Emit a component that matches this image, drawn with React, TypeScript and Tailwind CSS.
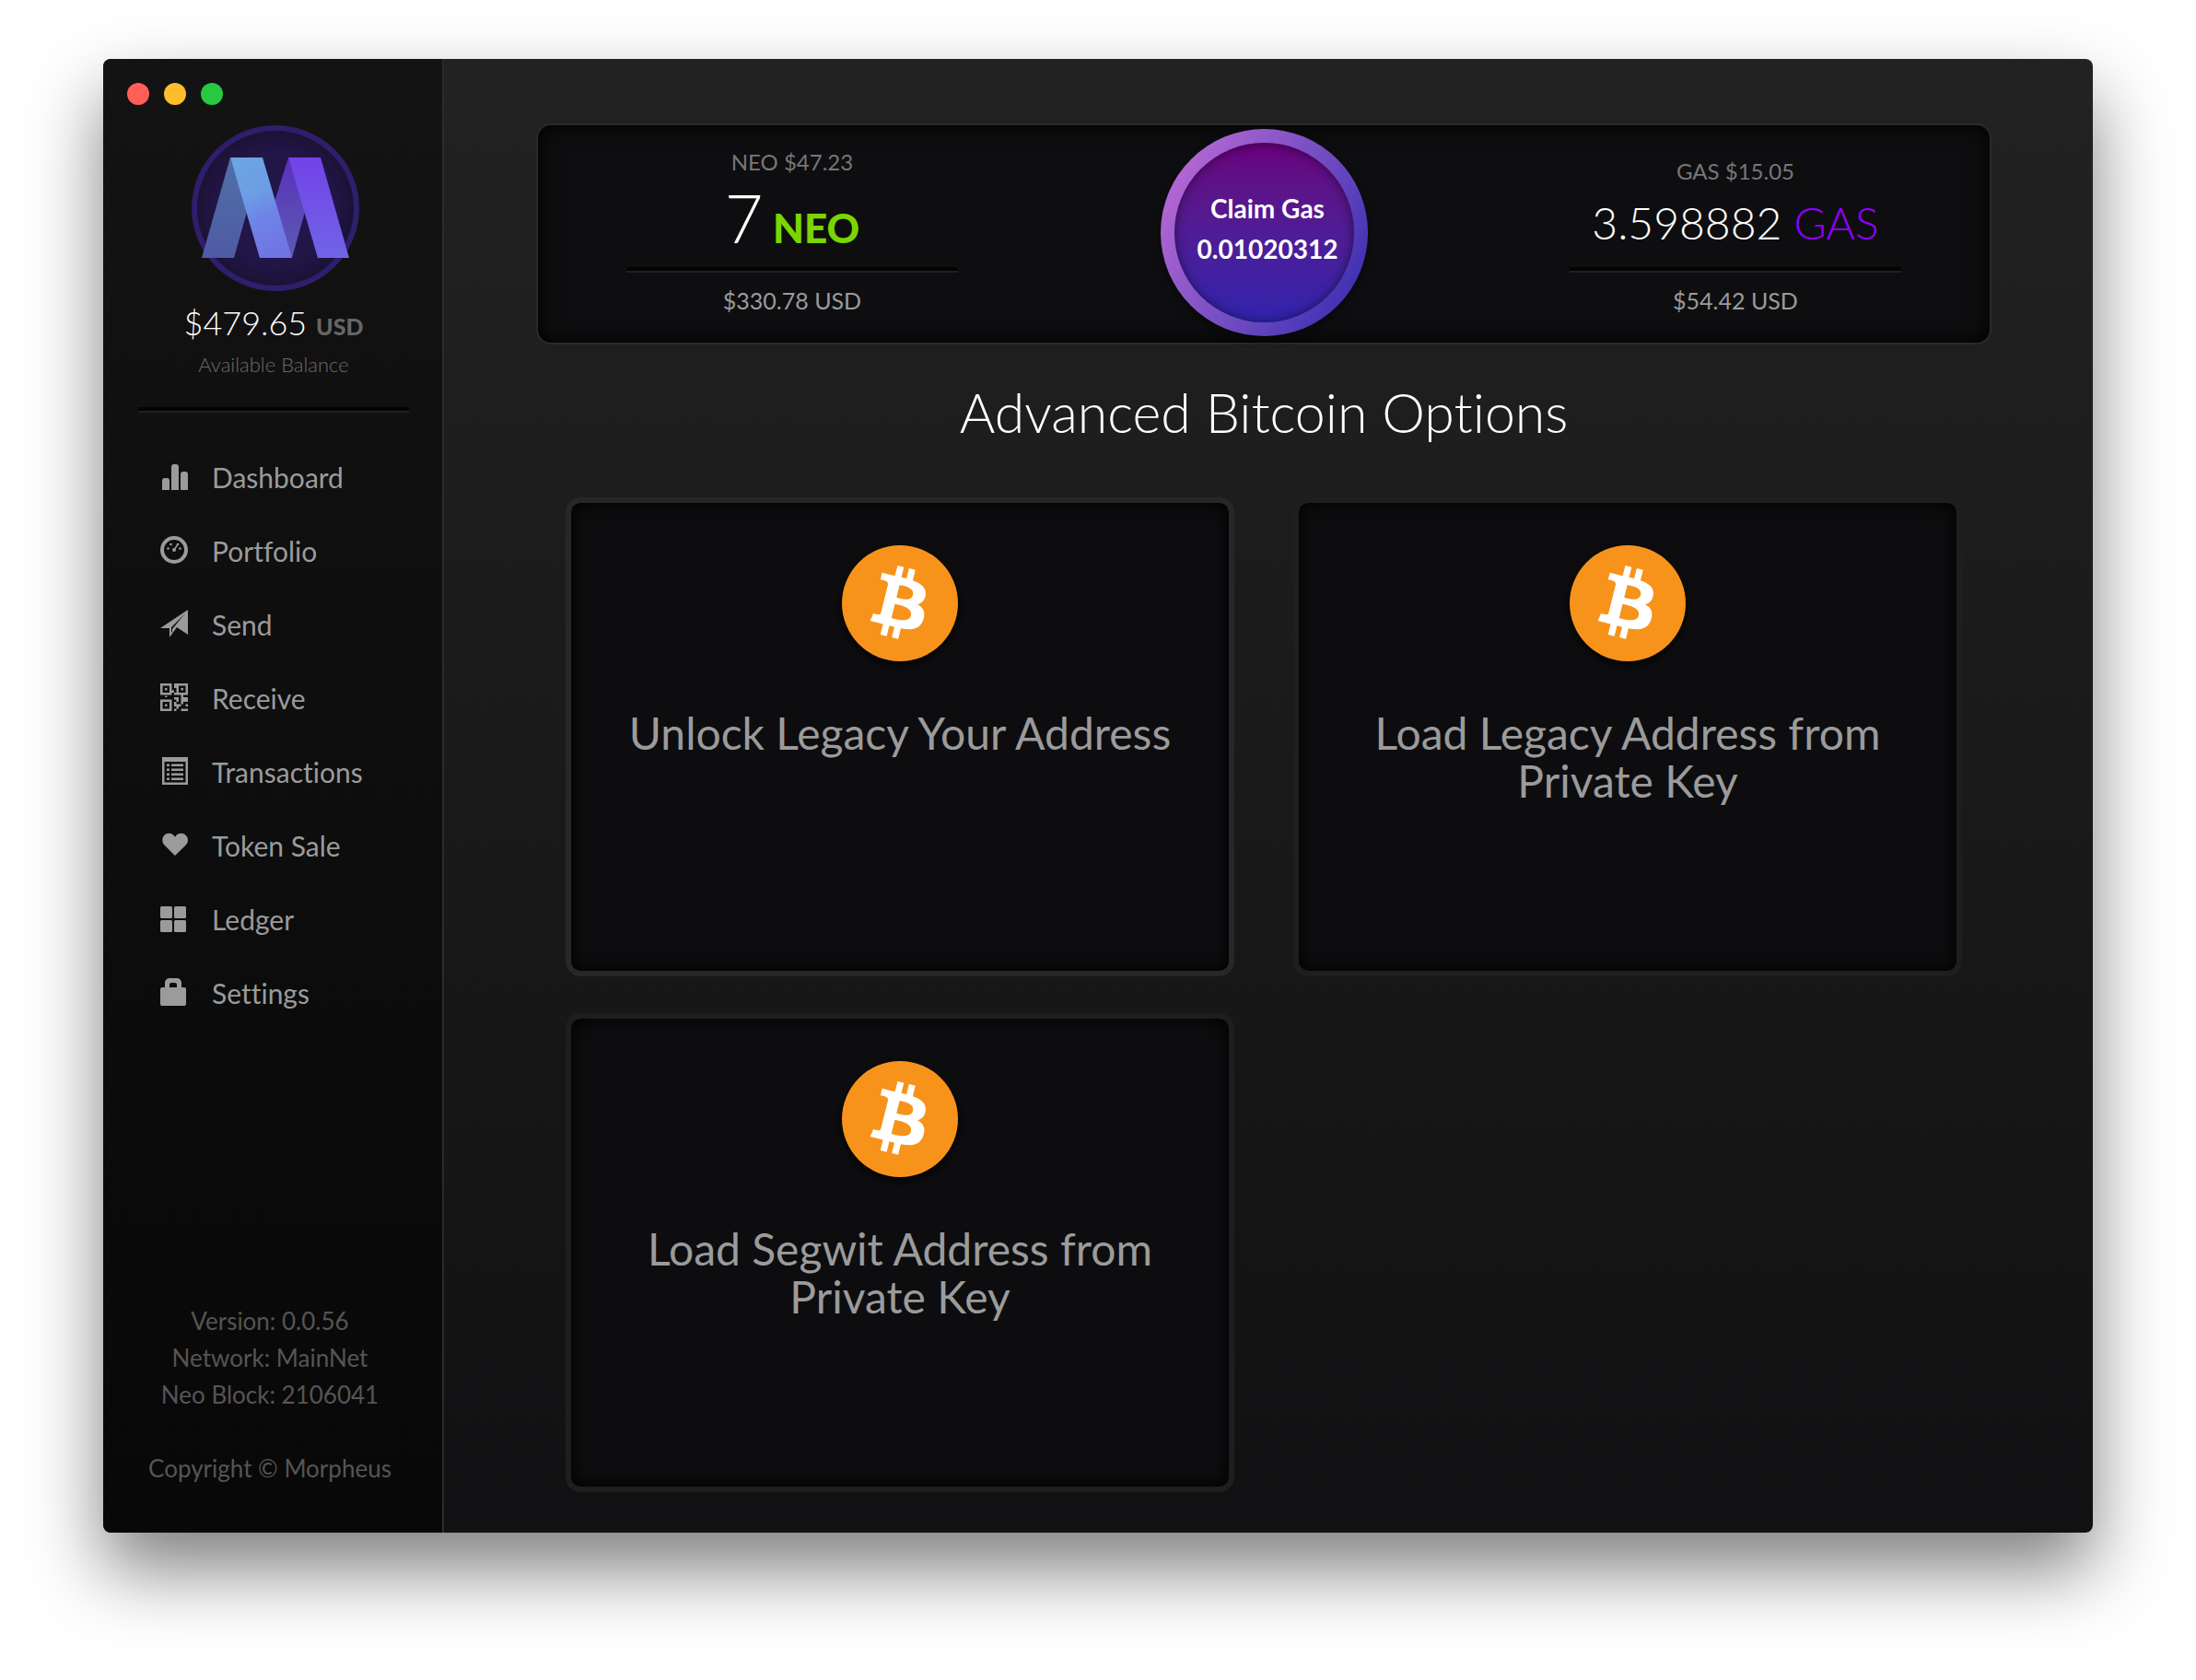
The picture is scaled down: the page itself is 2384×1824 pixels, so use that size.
import type { ReactNode } from "react";

type NavItem = { label: string; icon: ReactNode };

const navItems: NavItem[] = [
  {
    label: "Dashboard",
    icon: (
      <path d="M2 30V20a3 3 0 0 1 3-3h2a3 3 0 0 1 3 3v10zM12 30V5a3 3 0 0 1 3-3h2a3 3 0 0 1 3 3v25zM22 30V13a3 3 0 0 1 3-3h2a3 3 0 0 1 3 3v17z" />
    ),
  },
  {
    label: "Portfolio",
    icon: (
      <>
        <circle cx="15" cy="15" r="13" fill="none" stroke="currentColor" strokeWidth="4" />
        <circle cx="15" cy="15" r="2" />
        <path d="M15 15l4-6" stroke="currentColor" strokeWidth="1.5" />
        <circle cx="19" cy="9" r="1.3" />
        <circle cx="11.500" cy="9" r="1.3" />
        <circle cx="8.500" cy="13.500" r="1.3" />
        <circle cx="21.500" cy="13.500" r="1.3" />
      </>
    ),
  },
  {
    label: "Send",
    icon: <path d="M30 0L0 20h10v10l8-11 12 8zM27 4L13 21v3l-1 1v-6z" fillRule="evenodd" />,
  },
  {
    label: "Receive",
    icon: (
      <path
        fillRule="evenodd"
        d="M0 0h12.500v12.500H0zM2.500 2.500V10H10V2.500zM5 5h2.500v2.500H5zM17.500 0H30v12.500H17.500zM20 2.500V10h7.500V2.500zM22.500 5H25v2.500h-2.500zM0 17.500h12.500V30H0zM2.500 20v7.500H10V20zM5 22.500h2.500V25H5zM15 0h2.500v5H15zM12.500 7.500H15V10h-2.500zM15 10h2.500v2.500H15zM5 13.500h2.500V15h12.500v5h-2.500v-2.500H15V15H5zM22.500 12.500H25V15h5v5h-7.500zM15 20h2.500v2.500h5V20H25v2.500h-2.500V25h-2.500v2.500h-2.500V25H15zM27.500 22.500H30V25h-2.500zM15 27.500h2.500V30H15zM22.500 27.500H30V30h-7.500z"
      />
    ),
  },
  {
    label: "Transactions",
    icon: (
      <path
        fillRule="evenodd"
        d="M2 0h28v30H2zM4.500 5v22.500h23V5zM7 7.500h3V10H7zM12 7.500h13V10H12zM7 12.500h3V15H7zM12 12.500h13V15H12zM7 17.500h3V20H7zM12 17.500h13V20H12zM7 22.500h3V25H7zM12 22.500h13V25H12z"
      />
    ),
  },
  {
    label: "Token Sale",
    icon: (
      <path d="M16 27L4.500 15.500C2.500 13.500 2.300 11.500 2.300 10c0-4 3-7.300 7-7.300 3 0 5.200 1.300 6.700 4 1.500-2.700 3.700-4 6.700-4 4 0 7.300 3.300 7.300 7.300 0 2-.8 4-2.300 5.500z" />
    ),
  },
  {
    label: "Ledger",
    icon: (
      <>
        <rect x="0" y="2" width="13" height="13" rx="1.500" />
        <rect x="15" y="2" width="13" height="13" rx="1.500" />
        <rect x="0" y="17" width="13" height="13" rx="1.500" />
        <rect x="15" y="17" width="13" height="13" rx="1.500" />
      </>
    ),
  },
  {
    label: "Settings",
    icon: (
      <path
        fillRule="evenodd"
        d="M5 10V5a5 5 0 0 1 5-5h8a5 5 0 0 1 5 5v5h3a2 2 0 0 1 2 2v16a2 2 0 0 1-2 2H2a2 2 0 0 1-2-2V12a2 2 0 0 1 2-2zM10 10h8V7a2 2 0 0 0-2-2h-4a2 2 0 0 0-2 2z"
      />
    ),
  },
];

const options = [
  { title: "Unlock Legacy Your Address", active: true },
  { title: "Load Legacy Address from Private Key", active: false },
  { title: "Load Segwit Address from Private Key", active: false },
];

const Logo = () => (
  <svg viewBox="0 0 182 180" className="ml-1 h-[180px] w-[182px]" aria-hidden="true">
    <defs>
      <radialGradient id="disc">
        <stop offset="0.7" stopColor="#221548" />
        <stop offset="1" stopColor="#1a1233" />
      </radialGradient>
      <linearGradient id="legA" x1="0" y1="0" x2="0" y2="1">
        <stop offset="0" stopColor="#5070a8" />
        <stop offset="1" stopColor="#4f5aa4" />
      </linearGradient>
      <linearGradient id="barA" x1="0.300" y1="0" x2="0.600" y2="1">
        <stop offset="0" stopColor="#6ba5e2" />
        <stop offset="0.350" stopColor="#6c9ee5" />
        <stop offset="0.600" stopColor="#6e85e6" />
        <stop offset="1" stopColor="#7074e4" />
      </linearGradient>
      <linearGradient id="legB" x1="0" y1="0" x2="0" y2="1">
        <stop offset="0" stopColor="#5a2fc0" />
        <stop offset="0.500" stopColor="#5a47b4" />
        <stop offset="1" stopColor="#5b58b8" />
      </linearGradient>
      <linearGradient id="barB" x1="0" y1="0" x2="0" y2="1">
        <stop offset="0" stopColor="#7243e6" />
        <stop offset="1" stopColor="#7064e6" />
      </linearGradient>
    </defs>
    <ellipse cx="91" cy="90" rx="88" ry="87" fill="url(#disc)" stroke="#2e1e6b" strokeWidth="6" />
    <path d="M42 35L60 94 46 144H11z" fill="url(#legA)" />
    <path d="M105 35L123 94 109 144H84L91 80z" fill="url(#legB)" />
    <path d="M42 35H77L109 144H74z" fill="url(#barA)" />
    <path d="M105 35H140L171 144H137z" fill="url(#barB)" />
  </svg>
);

const BitcoinIcon = () => (
  <svg
    viewBox="0 0 64 64"
    className="size-[126px] shrink-0 drop-shadow-[0_4px_4px_rgba(0,0,0,0.8)]"
    aria-hidden="true"
  >
    <circle cx="32" cy="32" r="32" fill="#f7931a" />
    <path
      fill="#fff"
      d="M46.11 27.441c.636-4.258-2.606-6.547-7.039-8.074l1.438-5.768-3.512-.875-1.400 5.616c-.922-.23-1.870-.447-2.812-.662l1.410-5.653-3.509-.875-1.439 5.766c-.764-.174-1.514-.346-2.242-.527l.004-.018-4.842-1.209-.934 3.750s2.605.597 2.550.634c1.422.355 1.680 1.296 1.636 2.042l-1.638 6.571c.098.025.225.061.365.117l-.371-.092-2.297 9.205c-.174.432-.615 1.080-1.609.834.035.051-2.552-.637-2.552-.637l-1.743 4.020 4.570 1.139c.850.213 1.683.436 2.502.646l-1.453 5.835 3.507.875 1.440-5.772c.957.260 1.887.500 2.797.726L27.504 50.800l3.511.875 1.453-5.823c5.987 1.133 10.490.676 12.383-4.738 1.527-4.360-.075-6.875-3.225-8.516 2.294-.531 4.022-2.040 4.483-5.157zM38.087 38.690c-1.086 4.360-8.426 2.004-10.807 1.412l1.928-7.729c2.380.594 10.011 1.770 8.880 6.317zm1.085-11.312c-.990 3.966-7.100 1.951-9.083 1.457l1.748-7.010c1.983.494 8.367 1.416 7.335 5.553z"
    />
  </svg>
);

const Divider = () => (
  <hr className="h-1.5 w-full shrink-0 border-0 border-b-2 border-b-[#202020] bg-[#040404]" />
);

const Sidebar = () => (
  <aside className="flex w-[370px] shrink-0 flex-col rounded-l-lg border-r-2 border-[#2b2b2b] bg-linear-to-b from-[#131313] to-[#080808] pb-[50px]">
    <div className="flex gap-4 px-[26px] pt-[26px]">
      <button aria-label="Close" className="size-6 rounded-full bg-[#ff5f57]" />
      <button aria-label="Minimize" className="size-6 rounded-full bg-[#ffbd2e]" />
      <button aria-label="Zoom" className="size-6 rounded-full bg-[#28c940]" />
    </div>
    <div className="flex flex-col items-center pt-[22px] pr-9 pl-[38px]">
      <Logo />
      <p className="mt-2.5 text-[36px] leading-12 font-light text-white">
        $479.65 <span className="text-[25px] leading-none font-black text-[#666]">USD</span>
      </p>
      <p className="mt-1.5 mb-7.5 text-[22px] leading-8 font-light text-[#6b6b6b]">Available Balance</p>
      <Divider />
    </div>
    <nav className="pt-[30px]">
      <ul>
        {navItems.map(({ label, icon }) => (
          <li key={label}>
            <a href="#" className="flex h-20 items-center gap-6 pl-[62px] text-[30px] text-[#9b9b9b]">
              <svg viewBox="0 0 32 32" className="size-8" fill="currentColor" aria-hidden="true">
                {icon}
              </svg>
              {label}
            </a>
          </li>
        ))}
      </ul>
    </nav>
    <footer className="mt-auto pr-1.5 text-center text-[26px] leading-10 text-[#555]">
      <p>Version: 0.0.56</p>
      <p>Network: MainNet</p>
      <p>Neo Block: 2106041</p>
      <p className="mt-10">Copyright © Morpheus</p>
    </footer>
  </aside>
);

const BalanceBar = () => (
  <section className="flex h-60 items-center justify-between rounded-2xl border-2 border-[#2a2a2a] bg-[#0e0e10] px-24 pb-1 shadow-[inset_0_0_24px_#000]">
    <div className="flex h-[184px] w-[360px] flex-col items-center justify-end">
      <p className="text-[24px] leading-6 text-[#777]">NEO $47.23</p>
      <p className="mt-2 mb-3.5 text-[72px] leading-20 font-light text-white">
        7<span className="text-[44px] leading-none font-black text-[#7bd500]"> NEO</span>
      </p>
      <Divider />
      <p className="mt-3 text-[25px] leading-9 text-[#9b9b9b]">$330.78 USD</p>
    </div>
    <button className="size-[225px] rounded-full bg-linear-120 from-[#c86dd7] to-[#3023ae] p-[15px] shadow-[0_4px_8px_rgba(0,0,0,0.5)]">
      <span className="flex size-full flex-col items-center justify-center rounded-full bg-linear-to-b from-[#68007c] to-[#3023ae] pb-2 pl-2 text-[28px] leading-11 font-bold text-white shadow-[inset_0_0_12px_rgba(0,0,0,0.5)]">
        <span>Claim Gas</span>
        <span>0.01020312</span>
      </span>
    </button>
    <div className="flex h-[184px] w-[360px] flex-col items-center justify-end">
      <p className="text-[24px] leading-6 text-[#777]">GAS $15.05</p>
      <p className="mt-3 mb-4 text-[48px] leading-16 font-light whitespace-nowrap text-white">
        3.598882 <span className="text-[#9000ff]">GAS</span>
      </p>
      <Divider />
      <p className="mt-3 text-[25px] leading-9 text-[#9b9b9b]">$54.42 USD</p>
    </div>
  </section>
);

const OptionCard = ({ title, active }: { title: string; active: boolean }) => (
  <button
    className={`flex h-[520px] flex-col items-center gap-[52px] rounded-2xl border-6 bg-[#0d0d0f] bg-clip-padding px-12 pt-[46px] shadow-[inset_0_0_20px_#000] ${
      active ? "border-[#272727]" : "border-[#1e1e1e]"
    }`}
  >
    <BitcoinIcon />
    <span className="text-[48px] leading-[52px] text-[#9b9b9b]">{title}</span>
  </button>
);

export default function App() {
  return (
    <div className="min-h-screen bg-white px-28 py-16 font-['Lato',sans-serif] [font-variant-ligatures:none]">
      <div className="flex min-h-[1600px] overflow-clip rounded-lg bg-linear-to-b from-[#222] to-[#111113] shadow-[0_40px_80px_rgba(0,0,0,0.5)]">
        <Sidebar />
        <main className="flex-1 pt-[70px] pr-[110px] pl-[100px]">
          <BalanceBar />
          <h1 className="mt-[34px] text-center text-[59px] leading-20 font-light text-white">
            Advanced Bitcoin Options
          </h1>
          <div className="mt-[52px] grid grid-cols-2 gap-x-16 gap-y-10 px-8">
            {options.map((option) => (
              <OptionCard key={option.title} {...option} />
            ))}
          </div>
        </main>
      </div>
    </div>
  );
}
